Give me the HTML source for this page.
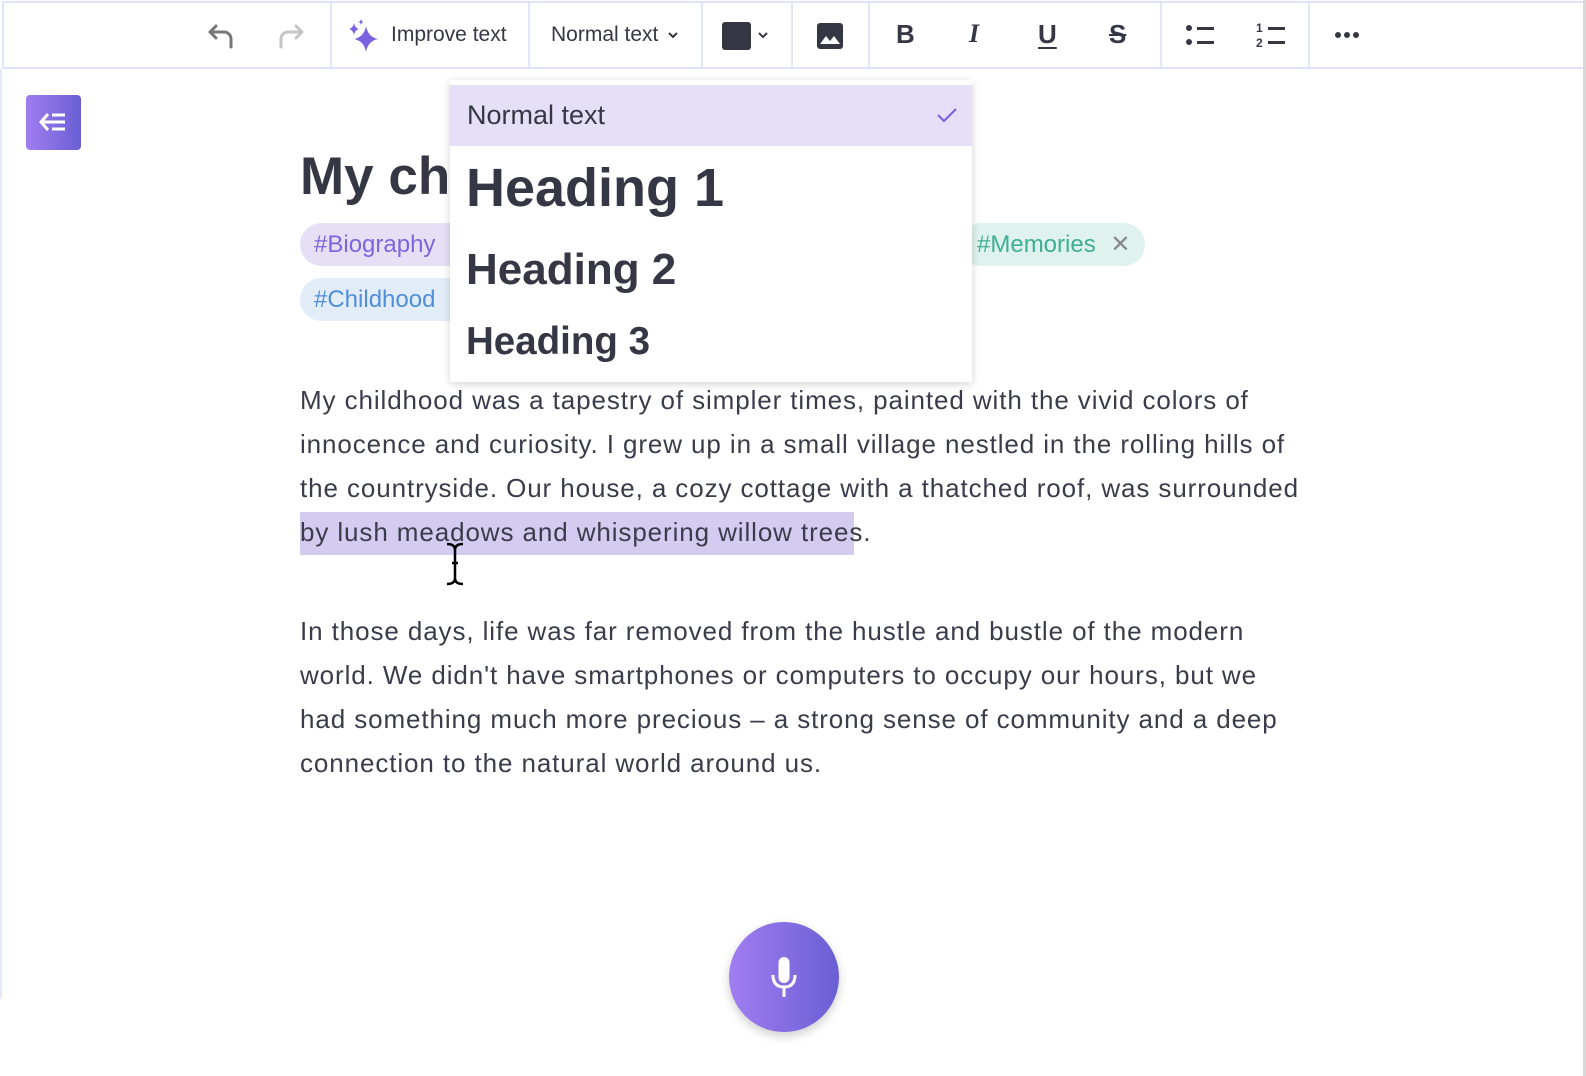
<!DOCTYPE html>
<html><head><meta charset="utf-8"><style>
*{margin:0;padding:0;box-sizing:border-box}
body{width:1586px;height:1076px;overflow:hidden;background:#fff;font-family:"Liberation Sans",sans-serif;color:#363744;position:relative}
.abs{position:absolute}
.tb{position:absolute;left:2px;top:1px;width:1581px;height:68px;border-top:2px solid #dfe3fb;border-bottom:2px solid #dfe3fb;border-left:2px solid #dfe3fb}
.sep{position:absolute;top:3px;width:2px;height:64px;background:#e3e6fb}
.line{position:absolute;left:300px;font-size:26px;letter-spacing:0.9px;white-space:nowrap;color:#3b3c4b;line-height:44px}
.tag{position:absolute;height:43px;border-radius:22px;font-size:24px;line-height:43px;padding-left:14px}
</style></head><body>
<div class="tb"></div>
<div class="abs" style="left:0;top:69px;width:2px;height:930px;background:#e6e8fb"></div>
<div class="abs" style="right:0;top:0;width:3px;height:1076px;background:#d8d8d8"></div>
<div class="sep" style="left:330px"></div>
<div class="sep" style="left:528px"></div>
<div class="sep" style="left:701px"></div>
<div class="sep" style="left:791px"></div>
<div class="sep" style="left:868px"></div>
<div class="sep" style="left:1160px"></div>
<div class="sep" style="left:1308px"></div>
<svg class="abs" style="left:206px;top:20px" width="30" height="30" viewBox="0 0 30 30" fill="none" stroke-width="3" stroke-linecap="round" stroke-linejoin="round"><path d="M10 6 L4 12 L10 18 M4 12 H18 a7 7 0 0 1 7 7 V27" stroke="#777"/></svg>
<svg class="abs" style="left:276px;top:20px" width="30" height="30" viewBox="0 0 30 30" fill="none" stroke-width="3" stroke-linecap="round" stroke-linejoin="round"><path d="M20 6 L26 12 L20 18 M26 12 H12 a7 7 0 0 0 -7 7 V27" stroke="#c4c4c4"/></svg>
<svg class="abs" style="left:346px;top:18px" width="36" height="36" viewBox="0 0 36 36" fill="#7b63e0"><path d="M20 8 Q22 19 32 21 Q22 23 20 34 Q18 23 8 21 Q18 19 20 8Z"/><path d="M8 5 Q9 10 13 11 Q9 12 8 17 Q7 12 3 11 Q7 10 8 5Z"/><path d="M15 1 Q15.5 3.5 17.5 4 Q15.5 4.5 15 7 Q14.5 4.5 12.5 4 Q14.5 3.5 15 1Z"/></svg>
<div class="abs" style="left:391px;top:23px;font-size:21px;color:#363744">Improve text</div>
<div class="abs" style="left:551px;top:23px;font-size:21px;color:#363744">Normal text</div>
<svg class="abs" style="left:667px;top:30px" width="12" height="10" viewBox="0 0 12 10"><path d="M2 3 L6 7 L10 3" stroke="#363744" stroke-width="2" fill="none"/></svg>
<div class="abs" style="left:722px;top:22px;width:29px;height:28px;background:#363744;border-radius:3px"></div>
<svg class="abs" style="left:757px;top:30px" width="12" height="10" viewBox="0 0 12 10"><path d="M2 3 L6 7 L10 3" stroke="#363744" stroke-width="2" fill="none"/></svg>
<svg class="abs" style="left:816px;top:22px" width="28" height="28" viewBox="0 0 28 28"><rect x="1" y="1" width="26" height="26" rx="3" fill="#363744"/><path d="M4 22 L10 14 L14 19 L18 14 L24 22Z" fill="#fff"/></svg>
<div class="abs" style="left:896px;top:19px;font-size:26px;font-weight:bold;color:#363744">B</div>
<div class="abs" style="left:969px;top:19px;font-size:26px;font-weight:bold;font-style:italic;color:#363744;font-family:'Liberation Serif',serif">I</div>
<div class="abs" style="left:1038px;top:19px;font-size:26px;font-weight:bold;color:#363744;text-decoration:underline;text-underline-offset:4px">U</div>
<div class="abs" style="left:1109px;top:19px;font-size:26px;font-weight:bold;color:#363744;text-decoration:line-through">S</div>
<svg class="abs" style="left:1184px;top:22px" width="32" height="28" viewBox="0 0 32 28" fill="#363744"><circle cx="5" cy="6" r="3"/><circle cx="5" cy="20" r="3"/><rect x="13" y="5" width="17" height="3"/><rect x="13" y="19" width="17" height="3"/></svg>
<svg class="abs" style="left:1255px;top:20px" width="32" height="30" viewBox="0 0 32 30" fill="#363744"><text x="1" y="12" font-size="12" font-weight="bold" font-family="Liberation Sans">1</text><text x="1" y="27" font-size="12" font-weight="bold" font-family="Liberation Sans">2</text><rect x="13" y="7" width="17" height="3"/><rect x="13" y="21" width="17" height="3"/></svg>
<svg class="abs" style="left:1334px;top:30px" width="26" height="10" viewBox="0 0 26 10" fill="#363744"><circle cx="4" cy="5" r="3"/><circle cx="13" cy="5" r="3"/><circle cx="22" cy="5" r="3"/></svg>
<div class="abs" style="left:26px;top:95px;width:55px;height:55px;border-radius:4px;background:linear-gradient(90deg,#a17ef0,#6a5ed4)"></div>
<svg class="abs" style="left:38px;top:108px" width="30" height="28" viewBox="0 0 30 28" fill="none" stroke="#fff" stroke-width="3"><path d="M10 6 L3 14 L10 22 M3 14 H27 M14 7 H27 M14 21 H27"/></svg>
<div class="abs" style="left:300px;top:146px;font-size:53px;font-weight:bold;color:#363744">My childhood</div>
<div class="tag" style="left:300px;top:223px;width:180px;background:#e6e0f7;color:#7b66dd">#Biography</div>
<div class="tag" style="left:300px;top:278px;width:180px;background:#e3edf9;color:#4f8fd9">#Childhood</div>
<div class="tag" style="left:960px;top:223px;width:185px;background:#dff2ee;color:#3faf93;padding-left:17px">#Memories <span style="color:#888;margin-left:8px">✕</span></div>
<div class="abs" style="left:450px;top:80px;width:522px;height:302px;background:#fff;box-shadow:0 2px 8px rgba(0,0,0,.18)">
 <div class="abs" style="left:0;top:5px;width:522px;height:61px;background:#e5e0f7"></div>
 <div class="abs" style="left:17px;top:20px;font-size:27px;color:#363744">Normal text</div>
 <svg class="abs" style="left:486px;top:26px" width="22" height="18" viewBox="0 0 22 18"><path d="M2 9 L8 15 L20 3" stroke="#7b66dd" stroke-width="2.2" fill="none"/></svg>
 <div class="abs" style="left:16px;top:77px;font-size:54px;font-weight:bold;color:#363744">Heading 1</div>
 <div class="abs" style="left:16px;top:165px;font-size:44px;font-weight:bold;color:#363744">Heading 2</div>
 <div class="abs" style="left:16px;top:240px;font-size:38.5px;font-weight:bold;color:#363744">Heading 3</div>
</div>
<div class="abs" style="left:300px;top:512px;width:554px;height:43px;background:#d3cbf0"></div>
<div class="line" style="top:378px">My childhood was a tapestry of simpler times, painted with the vivid colors of</div>
<div class="line" style="top:422px">innocence and curiosity. I grew up in a small village nestled in the rolling hills of</div>
<div class="line" style="top:466px">the countryside. Our house, a cozy cottage with a thatched roof, was surrounded</div>
<div class="line" style="top:510px">by lush meadows and whispering willow trees.</div>
<div class="line" style="top:609px">In those days, life was far removed from the hustle and bustle of the modern</div>
<div class="line" style="top:653px">world. We didn't have smartphones or computers to occupy our hours, but we</div>
<div class="line" style="top:697px">had something much more precious – a strong sense of community and a deep</div>
<div class="line" style="top:741px">connection to the natural world around us.</div>
<svg class="abs" style="left:444px;top:541px" width="22" height="46" viewBox="0 0 22 46" fill="none" stroke="#000" stroke-width="2.5"><path d="M3 3 Q11 3 11 9 V37 Q11 43 3 43 M19 3 Q11 3 11 9 M11 37 Q11 43 19 43 M8 22 H14"/></svg>
<div class="abs" style="left:729px;top:922px;width:110px;height:110px;border-radius:50%;background:linear-gradient(90deg,#a17ef0,#6a5ed4);box-shadow:0 4px 10px rgba(0,0,0,.2)"></div>
<svg class="abs" style="left:766px;top:955px" width="36" height="44" viewBox="0 0 36 44" fill="none" stroke="#fff" stroke-width="3"><rect x="12.5" y="2" width="11" height="26" rx="5.5" fill="#fff" stroke="none"/><path d="M7 20 Q7 32 18 32 Q29 32 29 20 M18 32 V42"/></svg>
</body></html>
